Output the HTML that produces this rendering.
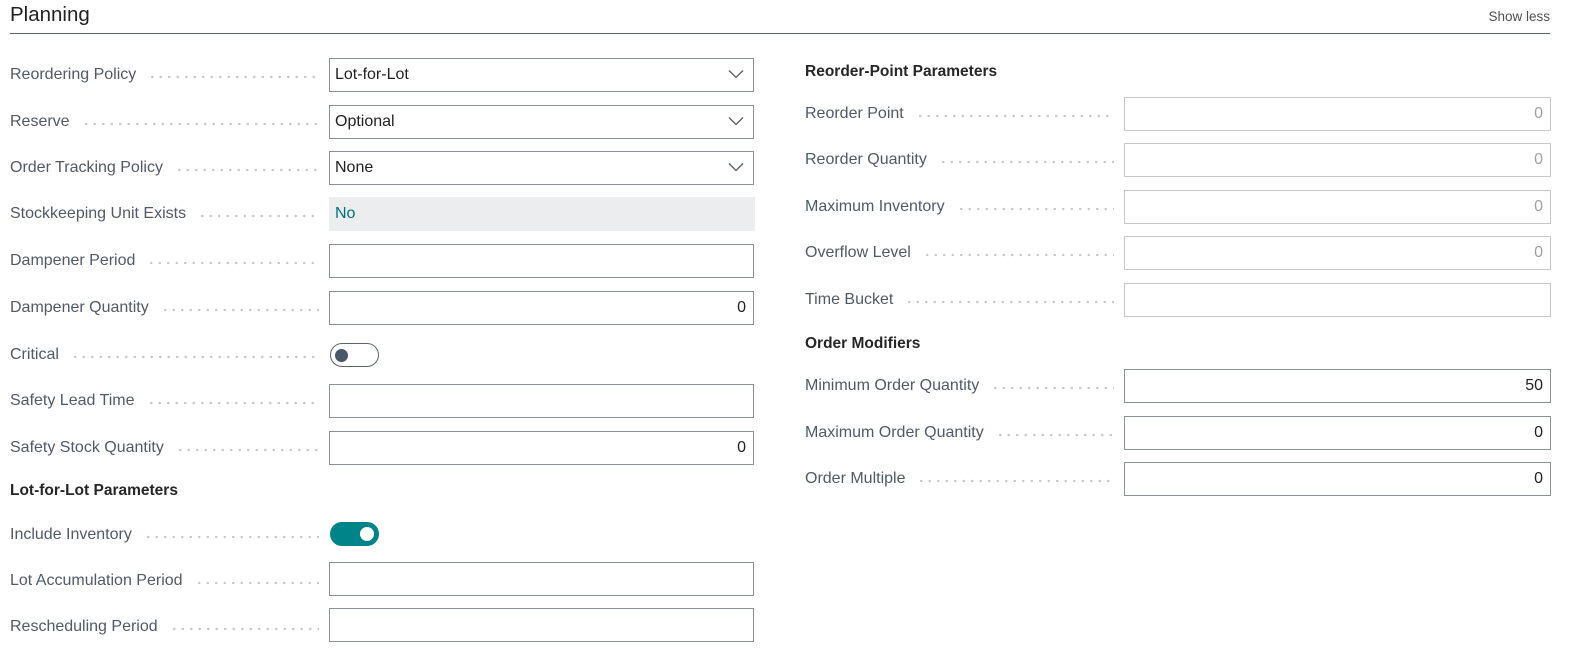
<!DOCTYPE html>
<html><head><meta charset="utf-8"><style>
body{margin:0;width:1577px;height:652px;background:#fff;font-family:"Segoe UI","Liberation Sans",sans-serif;position:relative;overflow:hidden;color:#212121}
.a{position:absolute}
.t{left:10px;top:3px;font-size:20.5px;color:#212121}
.sl{right:27px;top:9px;font-size:13.5px;color:#505050}
.rule{left:10px;top:33px;width:1540px;height:1px;background:#5a6470}
.lbl{font-size:16px;color:#505a66;white-space:nowrap;display:flex;align-items:center;height:34px}
.lbl .d{flex:1;margin-left:12px;margin-right:10px;height:4px;background-image:radial-gradient(circle,#c4c8cc 1.1px,transparent 1.4px);background-size:8.5px 4px;background-repeat:repeat-x;transform:translateY(2px)}
.f{height:32px;border:1px solid #8a9099;background:#fff;font-size:16px;color:#212121;line-height:32px;box-sizing:content-box}
.f.r{text-align:right;padding-right:7px}
.f.l{padding-left:5px}
.f.dis{border-color:#c8c8c8;color:#a0a0a0;background:#fff}
.h{font-size:15.5px;font-weight:bold;color:#262626}
.chev{position:absolute;right:9px;top:10px}
</style></head><body>
<div class="a t">Planning</div>
<div class="a sl">Show less</div>
<div class="a rule"></div>

<div class="a lbl" style="left:10px;top:58px;width:319px">Reordering Policy<span class="d"></span></div>
<div class="a f l" style="left:329px;top:58px;width:418px">Lot-for-Lot<svg class="chev" width="16" height="10" viewBox="0 0 16 10"><path d="M1 1.5 L8 8.5 L15 1.5" fill="none" stroke="#505a66" stroke-width="1.3"/></svg></div>

<div class="a lbl" style="left:10px;top:105px;width:319px">Reserve<span class="d"></span></div>
<div class="a f l" style="left:329px;top:105px;width:418px">Optional<svg class="chev" width="16" height="10" viewBox="0 0 16 10"><path d="M1 1.5 L8 8.5 L15 1.5" fill="none" stroke="#505a66" stroke-width="1.3"/></svg></div>

<div class="a lbl" style="left:10px;top:151px;width:319px">Order Tracking Policy<span class="d"></span></div>
<div class="a f l" style="left:329px;top:151px;width:418px">None<svg class="chev" width="16" height="10" viewBox="0 0 16 10"><path d="M1 1.5 L8 8.5 L15 1.5" fill="none" stroke="#505a66" stroke-width="1.3"/></svg></div>

<div class="a lbl" style="left:10px;top:197px;width:319px">Stockkeeping Unit Exists<span class="d"></span></div>
<div class="a" style="left:329px;top:197px;height:34px;background:#ebedef;color:#00707a;font-size:16px;line-height:34px;padding-left:6px;box-sizing:border-box;width:426px">No</div>

<div class="a lbl" style="left:10px;top:244px;width:319px">Dampener Period<span class="d"></span></div>
<div class="a f l" style="left:329px;top:244px;width:418px"></div>

<div class="a lbl" style="left:10px;top:291px;width:319px">Dampener Quantity<span class="d"></span></div>
<div class="a f r" style="left:329px;top:291px;width:416px">0</div>

<div class="a lbl" style="left:10px;top:338px;width:319px">Critical<span class="d"></span></div>
<div class="a" style="left:330px;top:343px;width:47px;height:22px;border:1px solid #5a6470;border-radius:12px"><div class="a" style="left:4px;top:5px;width:13px;height:13px;border-radius:50%;background:#4c566a"></div></div>

<div class="a lbl" style="left:10px;top:384px;width:319px">Safety Lead Time<span class="d"></span></div>
<div class="a f l" style="left:329px;top:384px;width:418px"></div>

<div class="a lbl" style="left:10px;top:431px;width:319px">Safety Stock Quantity<span class="d"></span></div>
<div class="a f r" style="left:329px;top:431px;width:416px">0</div>

<div class="a h" style="left:10px;top:482px">Lot-for-Lot Parameters</div>

<div class="a lbl" style="left:10px;top:518px;width:319px">Include Inventory<span class="d"></span></div>
<div class="a" style="left:330px;top:522px;width:49px;height:24px;background:#00848a;border-radius:12px"><div class="a" style="left:30px;top:5px;width:14px;height:14px;border-radius:50%;background:#fff"></div></div>

<div class="a lbl" style="left:10px;top:564px;width:319px">Lot Accumulation Period<span class="d"></span></div>
<div class="a f l" style="left:329px;top:562px;width:418px"></div>

<div class="a lbl" style="left:10px;top:610px;width:319px">Rescheduling Period<span class="d"></span></div>
<div class="a f l" style="left:329px;top:608px;width:418px"></div>

<div class="a h" style="left:805px;top:63px">Reorder-Point Parameters</div>

<div class="a lbl" style="left:805px;top:97px;width:319px">Reorder Point<span class="d"></span></div>
<div class="a f r dis" style="left:1124px;top:97px;width:418px">0</div>

<div class="a lbl" style="left:805px;top:143px;width:319px">Reorder Quantity<span class="d"></span></div>
<div class="a f r dis" style="left:1124px;top:143px;width:418px">0</div>

<div class="a lbl" style="left:805px;top:190px;width:319px">Maximum Inventory<span class="d"></span></div>
<div class="a f r dis" style="left:1124px;top:190px;width:418px">0</div>

<div class="a lbl" style="left:805px;top:236px;width:319px">Overflow Level<span class="d"></span></div>
<div class="a f r dis" style="left:1124px;top:236px;width:418px">0</div>

<div class="a lbl" style="left:805px;top:283px;width:319px">Time Bucket<span class="d"></span></div>
<div class="a f r dis" style="left:1124px;top:283px;width:418px"></div>

<div class="a h" style="left:805px;top:335px">Order Modifiers</div>

<div class="a lbl" style="left:805px;top:369px;width:319px">Minimum Order Quantity<span class="d"></span></div>
<div class="a f r" style="left:1124px;top:369px;width:418px">50</div>

<div class="a lbl" style="left:805px;top:416px;width:319px">Maximum Order Quantity<span class="d"></span></div>
<div class="a f r" style="left:1124px;top:416px;width:418px">0</div>

<div class="a lbl" style="left:805px;top:462px;width:319px">Order Multiple<span class="d"></span></div>
<div class="a f r" style="left:1124px;top:462px;width:418px">0</div>
</body></html>
